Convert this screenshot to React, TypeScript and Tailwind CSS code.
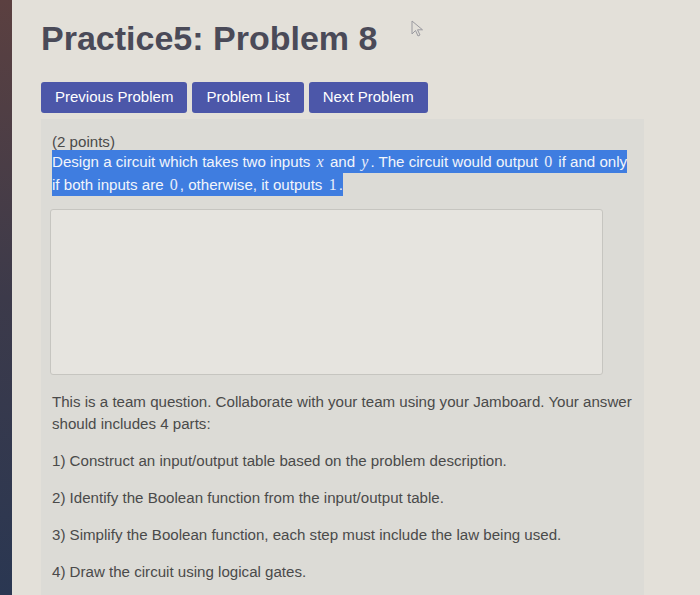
import React from 'react';

const font = { fontFamily: '"Liberation Sans", Arial, sans-serif' };

function M({ children, italic = false }: { children: React.ReactNode; italic?: boolean }) {
  // MathJax-like inline math inside the selection
  return (
    <span
      className={`px-[2px] text-[16px] leading-[17px] text-[#e9eefa] ${italic ? 'italic' : ''}`}
      style={{ fontFamily: '"Liberation Serif", "Times New Roman", serif' }}
    >
      {children}
    </span>
  );
}

export default function App() {
  const buttons = ['Previous Problem', 'Problem List', 'Next Problem'];
  const parts = [
    '1) Construct an input/output table based on the problem description.',
    '2) Identify the Boolean function from the input/output table.',
    '3) Simplify the Boolean function, each step must include the law being used.',
    '4) Draw the circuit using logical gates.',
  ];

  return (
    <div className="flex h-[595px] w-[700px] overflow-hidden bg-[#e3e0d9]" style={font}>
      {/* screen bezel edge */}
      <div className="w-[12px] shrink-0 bg-gradient-to-b from-[#5b4040] via-[#3c3a4a] to-[#2a3752]" />

      <div className="relative flex-1 pl-[29px] pt-[17px]">
        {/* mouse pointer */}
        <svg className="absolute left-[399px] top-[20px]" width="14" height="18" viewBox="0 0 14 18">
          <path d="M1 1 L1 14 L4.5 10.5 L7 16 L9 15 L6.5 9.8 L11.5 9.8 Z" fill="none" stroke="#9a9aa0" strokeWidth="1" />
        </svg>

        <h1 className="text-[34px] font-bold leading-[42px] text-[#4a4a58]">Practice5: Problem 8</h1>

        <div className="mt-[23px] flex gap-[5px]">
          {buttons.map((b) => (
            <button
              key={b}
              className="h-[31px] rounded-[3px] bg-[#4c57a9] px-[14px] text-[15px] text-white"
            >
              {b}
            </button>
          ))}
        </div>

        <div className="mt-[6px] min-h-[480px] w-[603px] bg-[#dcdbd6] pl-[11px] pr-[10px] pt-[14px] text-[15.1px] text-[#4a4a4a]">
          <p className="leading-[17px]">(2 points)</p>
          <p className="leading-[23px]">
            <span className="bg-[#3f7de0] py-[3px] text-[#f2f5fb] [box-decoration-break:clone]">
              Design a circuit which takes two inputs <M italic>x</M> and <M italic>y</M>. The circuit would output{' '}
              <M>0</M> if and only if both inputs are <M>0</M>, otherwise, it outputs <M>1</M>.
            </span>
          </p>

          <div className="ml-[-2px] mt-[13px] h-[166px] w-[553px] rounded-[3px] border border-[#c6c5c0] bg-[#e6e4df]" />

          <p className="mt-[16px] leading-[22px]">
            This is a team question. Collaborate with your team using your Jamboard. Your answer should includes 4 parts:
          </p>
          <div className="mt-[15px] flex flex-col gap-[15px]">
            {parts.map((p) => (
              <p key={p} className="leading-[22px]">
                {p}
              </p>
            ))}
          </div>
        </div>
      </div>
    </div>
  );
}
